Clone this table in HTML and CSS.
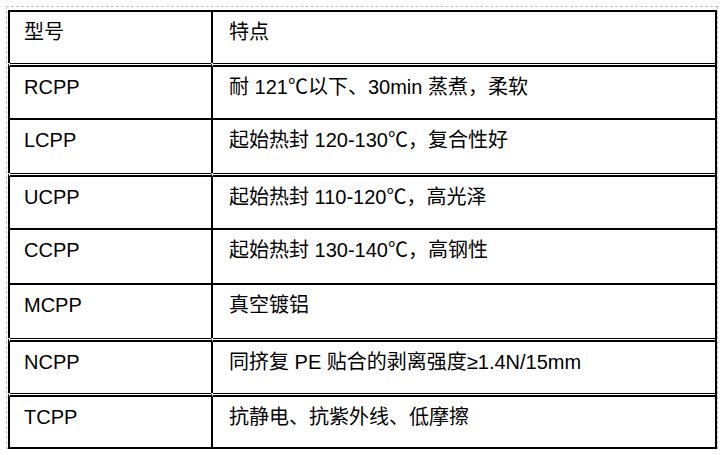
FILE: index.html
```html
<!DOCTYPE html>
<html lang="zh-CN">
<head>
<meta charset="utf-8">
<title>CPP 型号特点</title>
<link rel="stylesheet" href="styles.css">
</head>
<body>
<div class="frame">
  <table class="spec">
    <tr class="head">
      <td class="c1">型号</td>
      <td class="c2">特点</td>
    </tr>
    <tr class="dbl">
      <td class="c1">RCPP</td>
      <td class="c2">耐 121℃以下、30min 蒸煮，柔软</td>
    </tr>
    <tr>
      <td class="c1">LCPP</td>
      <td class="c2">起始热封 120-130℃，复合性好</td>
    </tr>
    <tr class="dbl">
      <td class="c1">UCPP</td>
      <td class="c2">起始热封 110-120℃，高光泽</td>
    </tr>
    <tr>
      <td class="c1">CCPP</td>
      <td class="c2">起始热封 130-140℃，高钢性</td>
    </tr>
    <tr>
      <td class="c1">MCPP</td>
      <td class="c2">真空镀铝</td>
    </tr>
    <tr class="dbl">
      <td class="c1">NCPP</td>
      <td class="c2">同挤复 PE 贴合的剥离强度≥1.4N/15mm</td>
    </tr>
    <tr class="dbl short">
      <td class="c1">TCPP</td>
      <td class="c2">抗静电、抗紫外线、低摩擦</td>
    </tr>
  </table>
</div>
</body>
</html>
```

FILE: styles.css
```css
html, body {
  margin: 0;
  padding: 0;
  background: #ffffff;
}

body {
  font-family: "Liberation Sans", Arial, "Noto Sans CJK SC", sans-serif;
  font-size: 20px;
  color: #000000;
}

.frame {
  margin: 6px 0 0 6px;
  width: 710px;
  height: 441px;
  border: 1px dashed #c4c4c4;
}

.spec {
  margin: 3px 0 0 1px;
  width: 709px;
  border-collapse: separate;
  border-spacing: 0;
  border-right: 2px solid #000;
  border-bottom: 2px solid #000;
  table-layout: fixed;
}

.spec tr {
  height: 55px;
}

.spec tr.head {
  height: 53px;
}

.spec tr.short {
  height: 54px;
}

.spec td {
  box-sizing: border-box;
  vertical-align: top;
  border-left: 2px solid #000;
  border-top: 2px solid #000;
  padding: 9px 10px 0 14px;
  line-height: 23px;
  white-space: nowrap;
}

.spec td.c1 {
  width: 203px;
}

.spec td.c2 {
  padding-left: 16px;
}

.spec tr.dbl td {
  border-top: 4px solid transparent;
  background-image: linear-gradient(to bottom, #000 0, #000 1px, #fff 1px, #fff 2px, #000 2px, #000 4px, #fff 4px);
  background-origin: border-box;
  background-clip: border-box;
  background-repeat: no-repeat;
}
```
